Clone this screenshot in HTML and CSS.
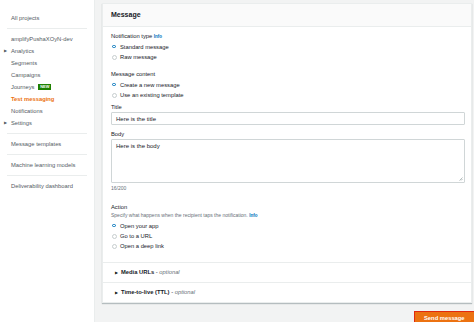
FILE: index.html
```html
<!DOCTYPE html>
<html lang="en">
<head>
    <meta charset="UTF-8">
    <meta name="viewport" content="width=device-width, initial-scale=1.0">
    <title>Test messaging</title>
    <link rel="stylesheet" href="styles.css">
</head>
<body>
    <div class="layout">
        <nav class="sidebar">
            <div class="nav-item">All projects</div>
            <div class="nav-sep"></div>
            <div class="nav-item">amplifyPushaXOyN-dev</div>
            <div class="nav-item has-caret">Analytics</div>
            <div class="nav-item">Segments</div>
            <div class="nav-item">Campaigns</div>
            <div class="nav-item">Journeys <span class="badge">NEW</span></div>
            <div class="nav-item active">Test messaging</div>
            <div class="nav-item">Notifications</div>
            <div class="nav-item has-caret">Settings</div>
            <div class="nav-sep"></div>
            <div class="nav-item">Message templates</div>
            <div class="nav-sep"></div>
            <div class="nav-item">Machine learning models</div>
            <div class="nav-sep"></div>
            <div class="nav-item">Deliverability dashboard</div>
        </nav>

        <main class="main">
            <section class="panel">
                <div class="panel-header">Message</div>
                <div class="panel-body">
                    <div class="label">Notification type <span class="info">Info</span></div>
                    <div class="radio checked">Standard message</div>
                    <div class="radio">Raw message</div>

                    <div class="label group">Message content</div>
                    <div class="radio checked">Create a new message</div>
                    <div class="radio">Use an existing template</div>

                    <div class="label title-label">Title</div>
                    <div class="input">Here is the title</div>

                    <div class="label body-label">Body</div>
                    <div class="textarea">
                        Here is the body
                        <svg class="grip" width="4" height="4" viewBox="0 0 4 4">
                            <path d="M0.5 3.5 L3.5 0.5 M2 3.5 L3.5 2" stroke="#879596" stroke-width="0.6"/>
                        </svg>
                    </div>
                    <div class="counter">16/200</div>

                    <div class="label action">Action</div>
                    <div class="desc">Specify what happens when the recipient taps the notification. <span class="info">Info</span></div>
                    <div class="radio checked">Open your app</div>
                    <div class="radio">Go to a URL</div>
                    <div class="radio">Open a deep link</div>
                </div>
                <div class="expander"><span class="caret">&#9654;</span><b>Media URLs</b> - <i>optional</i></div>
                <div class="expander"><span class="caret">&#9654;</span><b>Time-to-live (TTL)</b> - <i>optional</i></div>
            </section>
            <div class="actions">
                <button class="primary">Send message</button>
            </div>
        </main>
    </div>
</body>
</html>
```

FILE: styles.css
```css
body {
    margin: 0;
    font-family: "Liberation Sans", Arial, sans-serif;
    font-size: 5.8px;
    color: #16191f;
    background: #f2f3f3;
    overflow: hidden;
}
.layout {
    display: flex;
    height: 322px;
}
.sidebar {
    width: 95px;
    flex-shrink: 0;
    background: white;
    border-right: 1px solid #eaeded;
    box-sizing: border-box;
    padding-top: 12px;
}
.nav-item {
    position: relative;
    height: 12px;
    line-height: 12px;
    padding-left: 11px;
    color: #545b64;
}
.nav-sep {
    height: 1px;
    background: #eaeded;
    margin: 4px 7px;
}
.nav-item.has-caret::before {
    content: "\25B6";
    position: absolute;
    left: 4px;
    font-size: 4px;
    color: #545b64;
}
.nav-item.active {
    color: #ec7211;
    font-weight: bold;
}
.badge {
    display: inline-block;
    background: #1d8102;
    color: white;
    font-size: 4px;
    font-weight: bold;
    line-height: 6px;
    padding: 0 2px;
    margin-left: 2px;
    vertical-align: 1px;
}
.main {
    flex: 1;
    padding: 3px 2px 0 7px;
    display: flex;
    flex-direction: column;
}
.panel {
    background: white;
    border: 1px solid #eaeded;
    box-shadow: 0 1px 1px rgba(0,28,36,0.25);
}
.panel-header {
    height: 22px;
    line-height: 22px;
    padding-left: 8px;
    background: #fafafa;
    border-bottom: 1px solid #eaeded;
    font-size: 7px;
    font-weight: bold;
}
.panel-body {
    padding: 4px 8px 11px 8px;
    border-bottom: 1px solid #eaeded;
}
.label {
    line-height: 10px;
}
.label.group {
    margin-top: 7px;
    margin-bottom: 1px;
}
.label.title-label {
    margin-top: 2px;
}
.label.body-label {
    margin-top: 4px;
}
.label.action {
    margin-top: 9px;
}
.info {
    color: #0073bb;
    font-weight: bold;
    font-size: 4.5px;
}
.radio {
    position: relative;
    line-height: 10px;
    padding-left: 9px;
}
.radio::before {
    content: "";
    position: absolute;
    left: 1px;
    top: 2.5px;
    width: 3px;
    height: 3px;
    border: 1px solid #c6cdce;
    border-radius: 50%;
    background: white;
}
.radio.checked::before {
    border: 1.6px solid #0073bb;
    width: 1.8px;
    height: 1.8px;
}
.input {
    height: 13px;
    line-height: 13px;
    border: 1px solid #d0d6d7;
    border-radius: 1px;
    box-sizing: border-box;
    padding-left: 4px;
    margin-right: -2px;
    font-size: 6px;
}
.textarea {
    position: relative;
    height: 44px;
    border: 1px solid #d0d6d7;
    border-radius: 1px;
    box-sizing: border-box;
    padding: 2px 4px;
    line-height: 8px;
    margin-right: -2px;
    font-size: 6px;
}
.grip {
    position: absolute;
    right: 1px;
    bottom: 1px;
}
.counter {
    line-height: 10px;
    font-size: 5px;
    color: #687078;
}
.desc {
    line-height: 6px;
    font-size: 5px;
    color: #687078;
    margin-bottom: 2px;
}
.expander {
    height: 19px;
    line-height: 19px;
    padding-left: 12px;
    border-bottom: 1px solid #eaeded;
}
.expander:last-child {
    border-bottom: none;
}
.expander .caret {
    font-size: 4px;
    margin-right: 3px;
}
.expander i {
    color: #687078;
}
.actions {
    display: flex;
    justify-content: flex-end;
    padding-top: 8px;
    margin-right: -4px;
}
.primary {
    background: #ec7211;
    color: white;
    border: 1px solid #e0290f;
    font-family: inherit;
    font-size: 5.8px;
    font-weight: bold;
    height: 13px;
    width: 62px;
    padding: 0 0 0 9px;
    text-align: left;
    white-space: nowrap;
}
```
